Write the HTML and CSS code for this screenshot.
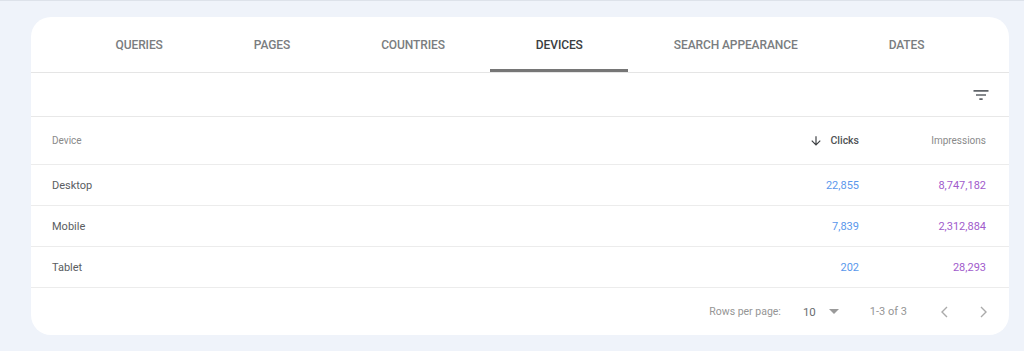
FILE: index.html
```html
<!DOCTYPE html>
<html lang="en">
<head>
<meta charset="utf-8">
<title>Devices</title>
<link rel="stylesheet" href="styles.css">
</head>
<body>
<div class="page">
  <div class="card">
    <nav class="tabs">
      <div class="tab">QUERIES</div>
      <div class="tab">PAGES</div>
      <div class="tab">COUNTRIES</div>
      <div class="tab active">DEVICES</div>
      <div class="tab">SEARCH APPEARANCE</div>
      <div class="tab">DATES</div>
    </nav>
    <div class="toolbar">
      <svg class="filter" viewBox="0 0 24 24" width="20" height="20"><path d="M10 18h4v-2h-4v2zM3 6v2h18V6H3zm3 7h12v-2H6v2z"/></svg>
    </div>
    <div class="row head">
      <div class="c-name">Device</div>
      <div class="c-num sorted">
        <svg class="arrow" viewBox="0 0 24 24" width="14" height="14"><path d="M20 12l-1.41-1.41L13 16.17V4h-2v12.17l-5.58-5.59L4 12l8 8 8-8z"/></svg>
        <span>Clicks</span>
      </div>
      <div class="c-num">Impressions</div>
    </div>
    <div class="row">
      <div class="c-name">Desktop</div>
      <div class="c-num clicks">22,855</div>
      <div class="c-num impr">8,747,182</div>
    </div>
    <div class="row">
      <div class="c-name">Mobile</div>
      <div class="c-num clicks">7,839</div>
      <div class="c-num impr">2,312,884</div>
    </div>
    <div class="row">
      <div class="c-name">Tablet</div>
      <div class="c-num clicks">202</div>
      <div class="c-num impr">28,293</div>
    </div>
    <div class="footer">
      <span class="label">Rows per page:</span>
      <span class="rpp">10</span>
      <svg class="caret" viewBox="0 0 10 5" width="10" height="5"><path d="M0 0h10L5 5z"/></svg>
      <span class="range">1-3 of 3</span>
      <div class="pager">
        <svg viewBox="0 0 24 24" width="24" height="24"><path d="M14 7l-5 5 5 5"/></svg>
        <svg viewBox="0 0 24 24" width="24" height="24"><path d="M10 7l5 5-5 5"/></svg>
      </div>
    </div>
  </div>
</div>
</body>
</html>
```

FILE: styles.css
```css
* { box-sizing: border-box; }
html, body { margin: 0; padding: 0; }
body {
  background: #eff3fa;
  font-family: Roboto, "Liberation Sans", Arial, sans-serif;
  color: #3c4043;
}
.page {
  border-top: 1px solid #dde2ea;
  padding: 16px 15px 16px 31px;
}
.card {
  background: #fff;
  border-radius: 20px;
  overflow: hidden;
}
.tabs {
  display: flex;
  justify-content: center;
  height: 56px;
  border-bottom: 1px solid #e5e5e5;
}
.tab {
  position: relative;
  padding: 0 45.5px;
  display: flex;
  align-items: center;
  font-size: 12px;
  font-weight: 500;
  color: #7a7d80;
  letter-spacing: -0.1px;
}
.tab.active { color: #3a3d41; }
.tab.active::after {
  content: "";
  position: absolute;
  left: 0;
  right: 0;
  bottom: 0;
  height: 3px;
  background: #767676;
}
.toolbar {
  height: 44px;
  border-bottom: 1px solid #e8e8e8;
  display: flex;
  justify-content: flex-end;
  align-items: center;
  padding-right: 18px;
}
.filter { fill: #5f6368; }
.row {
  display: grid;
  grid-template-columns: 1fr 140px 127px;
  align-items: center;
  height: 41px;
  padding: 0 23px 0 21px;
  border-bottom: 1px solid #ececec;
  font-size: 11px;
  color: #5a5d61;
}
.row.head {
  height: 48px;
  font-size: 10px;
  color: #8a8a8a;
}
.c-num {
  text-align: right;
  display: flex;
  justify-content: flex-end;
  align-items: center;
}
.sorted {
  color: #505356;
  font-weight: 500;
  font-size: 10.5px;
  gap: 7px;
}
.arrow { fill: #3c3f42; }
.clicks { color: #5a98ec; }
.impr { color: #a15bcc; }
.footer {
  height: 47px;
  display: flex;
  justify-content: flex-end;
  align-items: center;
  padding-right: 14px;
  font-size: 10.5px;
  color: #959595;
}
.rpp { margin-left: 22px; color: #6a6d70; font-size: 11.5px; }
.caret { margin-left: 13px; fill: #9a9a9a; }
.range { margin-left: 31px; font-size: 11px; }
.pager { display: flex; gap: 14px; margin-left: 26px; }
.pager svg { fill: none; stroke: #aaa; stroke-width: 1.4; }
```
